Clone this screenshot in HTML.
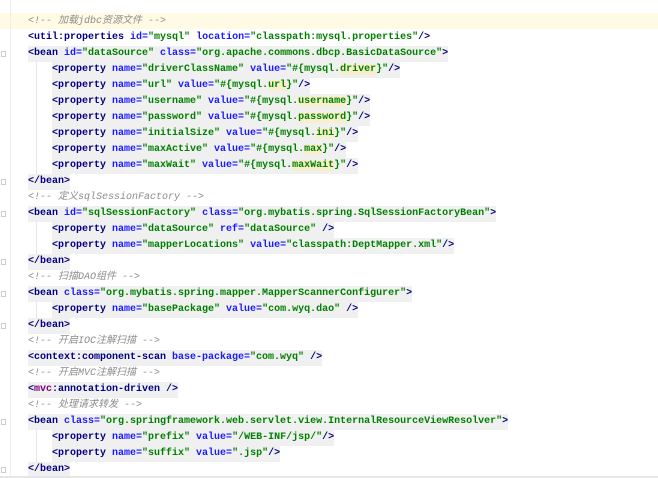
<!DOCTYPE html>
<html><head><meta charset="utf-8"><style>
body{margin:0;width:658px;height:478px;background:#fff;position:relative;overflow:hidden;font-family:"Liberation Mono","Noto Sans CJK SC",monospace;font-size:10px;font-weight:bold}
.l{position:absolute;height:16px;line-height:16px;white-space:pre;margin-top:2px}
.b{background:#f0f0f0}
.t{color:#000080}.a{color:#1a1aff}.v{color:#008000}.c{color:#8c8c8c;font-style:italic;font-weight:normal}
.h{background:#f9efcc}
.g{position:absolute;left:10px;top:0;width:1px;height:478px;background:#eee}
.ig{position:absolute;left:36px;width:1px;background:#e4e4e4}
.f{position:absolute;left:1px;width:5px;height:6px;border:1px solid #ccc;box-sizing:border-box;margin-top:2px}
</style></head><body>
<div style="position:absolute;left:0;top:13px;width:658px;height:16px;background:#fffae3"></div>
<div class="g"></div>
<div class="ig" style="top:62px;height:112px"></div>
<div class="ig" style="top:222px;height:32px"></div>
<div class="ig" style="top:302px;height:16px"></div>
<div class="ig" style="top:430px;height:32px"></div>
<div class="f" style="top:49px"></div><div class="f" style="top:177px"></div>
<div class="f" style="top:209px"></div><div class="f" style="top:257px"></div>
<div class="f" style="top:289px"></div><div class="f" style="top:321px"></div>
<div class="f" style="top:417px"></div><div class="f" style="top:465px"></div>
<div class="l c" style="left:28px;top:12px">&lt;!-- 加载jdbc资源文件 --&gt;</div>
<div class="l" style="left:28px;top:28px"><span class="t">&lt;util:properties </span><span class="a">id=</span><span class="v">"mysql" </span><span class="a">location=</span><span class="v">"classpath:mysql.properties"</span><span class="t">/&gt;</span></div>
<div class="l b" style="left:28px;top:44px"><span class="t">&lt;bean </span><span class="a">id=</span><span class="v">"dataSource" </span><span class="a">class=</span><span class="v">"org.apache.commons.dbcp.BasicDataSource"</span><span class="t">&gt;</span></div>
<div class="l b" style="left:52px;top:60px"><span class="t">&lt;property </span><span class="a">name=</span><span class="v">"driverClassName" </span><span class="a">value=</span><span class="v">"#{mysql.<span class="h">driver</span>}"</span><span class="t">/&gt;</span></div>
<div class="l b" style="left:52px;top:76px"><span class="t">&lt;property </span><span class="a">name=</span><span class="v">"url" </span><span class="a">value=</span><span class="v">"#{mysql.<span class="h">url</span>}"</span><span class="t">/&gt;</span></div>
<div class="l b" style="left:52px;top:92px"><span class="t">&lt;property </span><span class="a">name=</span><span class="v">"username" </span><span class="a">value=</span><span class="v">"#{mysql.<span class="h">username</span>}"</span><span class="t">/&gt;</span></div>
<div class="l b" style="left:52px;top:108px"><span class="t">&lt;property </span><span class="a">name=</span><span class="v">"password" </span><span class="a">value=</span><span class="v">"#{mysql.<span class="h">password</span>}"</span><span class="t">/&gt;</span></div>
<div class="l b" style="left:52px;top:124px"><span class="t">&lt;property </span><span class="a">name=</span><span class="v">"initialSize" </span><span class="a">value=</span><span class="v">"#{mysql.<span class="h">ini</span>}"</span><span class="t">/&gt;</span></div>
<div class="l b" style="left:52px;top:140px"><span class="t">&lt;property </span><span class="a">name=</span><span class="v">"maxActive" </span><span class="a">value=</span><span class="v">"#{mysql.<span class="h">max</span>}"</span><span class="t">/&gt;</span></div>
<div class="l b" style="left:52px;top:156px"><span class="t">&lt;property </span><span class="a">name=</span><span class="v">"maxWait" </span><span class="a">value=</span><span class="v">"#{mysql.<span class="h">maxWait</span>}"</span><span class="t">/&gt;</span></div>
<div class="l b t" style="left:28px;top:172px">&lt;/bean&gt;</div>
<div class="l c" style="left:28px;top:188px">&lt;!-- 定义sqlSessionFactory --&gt;</div>
<div class="l b" style="left:28px;top:204px"><span class="t">&lt;bean </span><span class="a">id=</span><span class="v">"sqlSessionFactory" </span><span class="a">class=</span><span class="v">"org.mybatis.spring.SqlSessionFactoryBean"</span><span class="t">&gt;</span></div>
<div class="l b" style="left:52px;top:220px"><span class="t">&lt;property </span><span class="a">name=</span><span class="v">"dataSource" </span><span class="a">ref=</span><span class="v">"dataSource" </span><span class="t">/&gt;</span></div>
<div class="l b" style="left:52px;top:236px"><span class="t">&lt;property </span><span class="a">name=</span><span class="v">"mapperLocations" </span><span class="a">value=</span><span class="v">"classpath:DeptMapper.xml"</span><span class="t">/&gt;</span></div>
<div class="l b t" style="left:28px;top:252px">&lt;/bean&gt;</div>
<div class="l c" style="left:28px;top:268px">&lt;!-- 扫描DAO组件 --&gt;</div>
<div class="l b" style="left:28px;top:284px"><span class="t">&lt;bean </span><span class="a">class=</span><span class="v">"org.mybatis.spring.mapper.MapperScannerConfigurer"</span><span class="t">&gt;</span></div>
<div class="l b" style="left:52px;top:300px"><span class="t">&lt;property </span><span class="a">name=</span><span class="v">"basePackage" </span><span class="a">value=</span><span class="v">"com.wyq.dao" </span><span class="t">/&gt;</span></div>
<div class="l b t" style="left:28px;top:316px">&lt;/bean&gt;</div>
<div class="l c" style="left:28px;top:332px">&lt;!-- 开启IOC注解扫描 --&gt;</div>
<div class="l b" style="left:28px;top:348px"><span class="t">&lt;context:component-scan </span><span class="a">base-package=</span><span class="v">"com.wyq" </span><span class="t">/&gt;</span></div>
<div class="l c" style="left:28px;top:364px">&lt;!-- 开启MVC注解扫描 --&gt;</div>
<div class="l b" style="left:28px;top:380px"><span class="t">&lt;</span><span style="color:#800080">mvc</span><span class="t">:annotation-driven /&gt;</span></div>
<div class="l c" style="left:28px;top:396px">&lt;!-- 处理请求转发 --&gt;</div>
<div class="l b" style="left:28px;top:412px"><span class="t">&lt;bean </span><span class="a">class=</span><span class="v">"org.springframework.web.servlet.view.InternalResourceViewResolver"</span><span class="t">&gt;</span></div>
<div class="l b" style="left:52px;top:428px"><span class="t">&lt;property </span><span class="a">name=</span><span class="v">"prefix" </span><span class="a">value=</span><span class="v">"/WEB-INF/jsp/"</span><span class="t">/&gt;</span></div>
<div class="l b" style="left:52px;top:444px"><span class="t">&lt;property </span><span class="a">name=</span><span class="v">"suffix" </span><span class="a">value=</span><span class="v">".jsp"</span><span class="t">/&gt;</span></div>
<div class="l b t" style="left:28px;top:460px">&lt;/bean&gt;</div>
<div style="position:absolute;left:0;top:476px;width:658px;height:2px;background:#e6e6e6"></div>
</body></html>
